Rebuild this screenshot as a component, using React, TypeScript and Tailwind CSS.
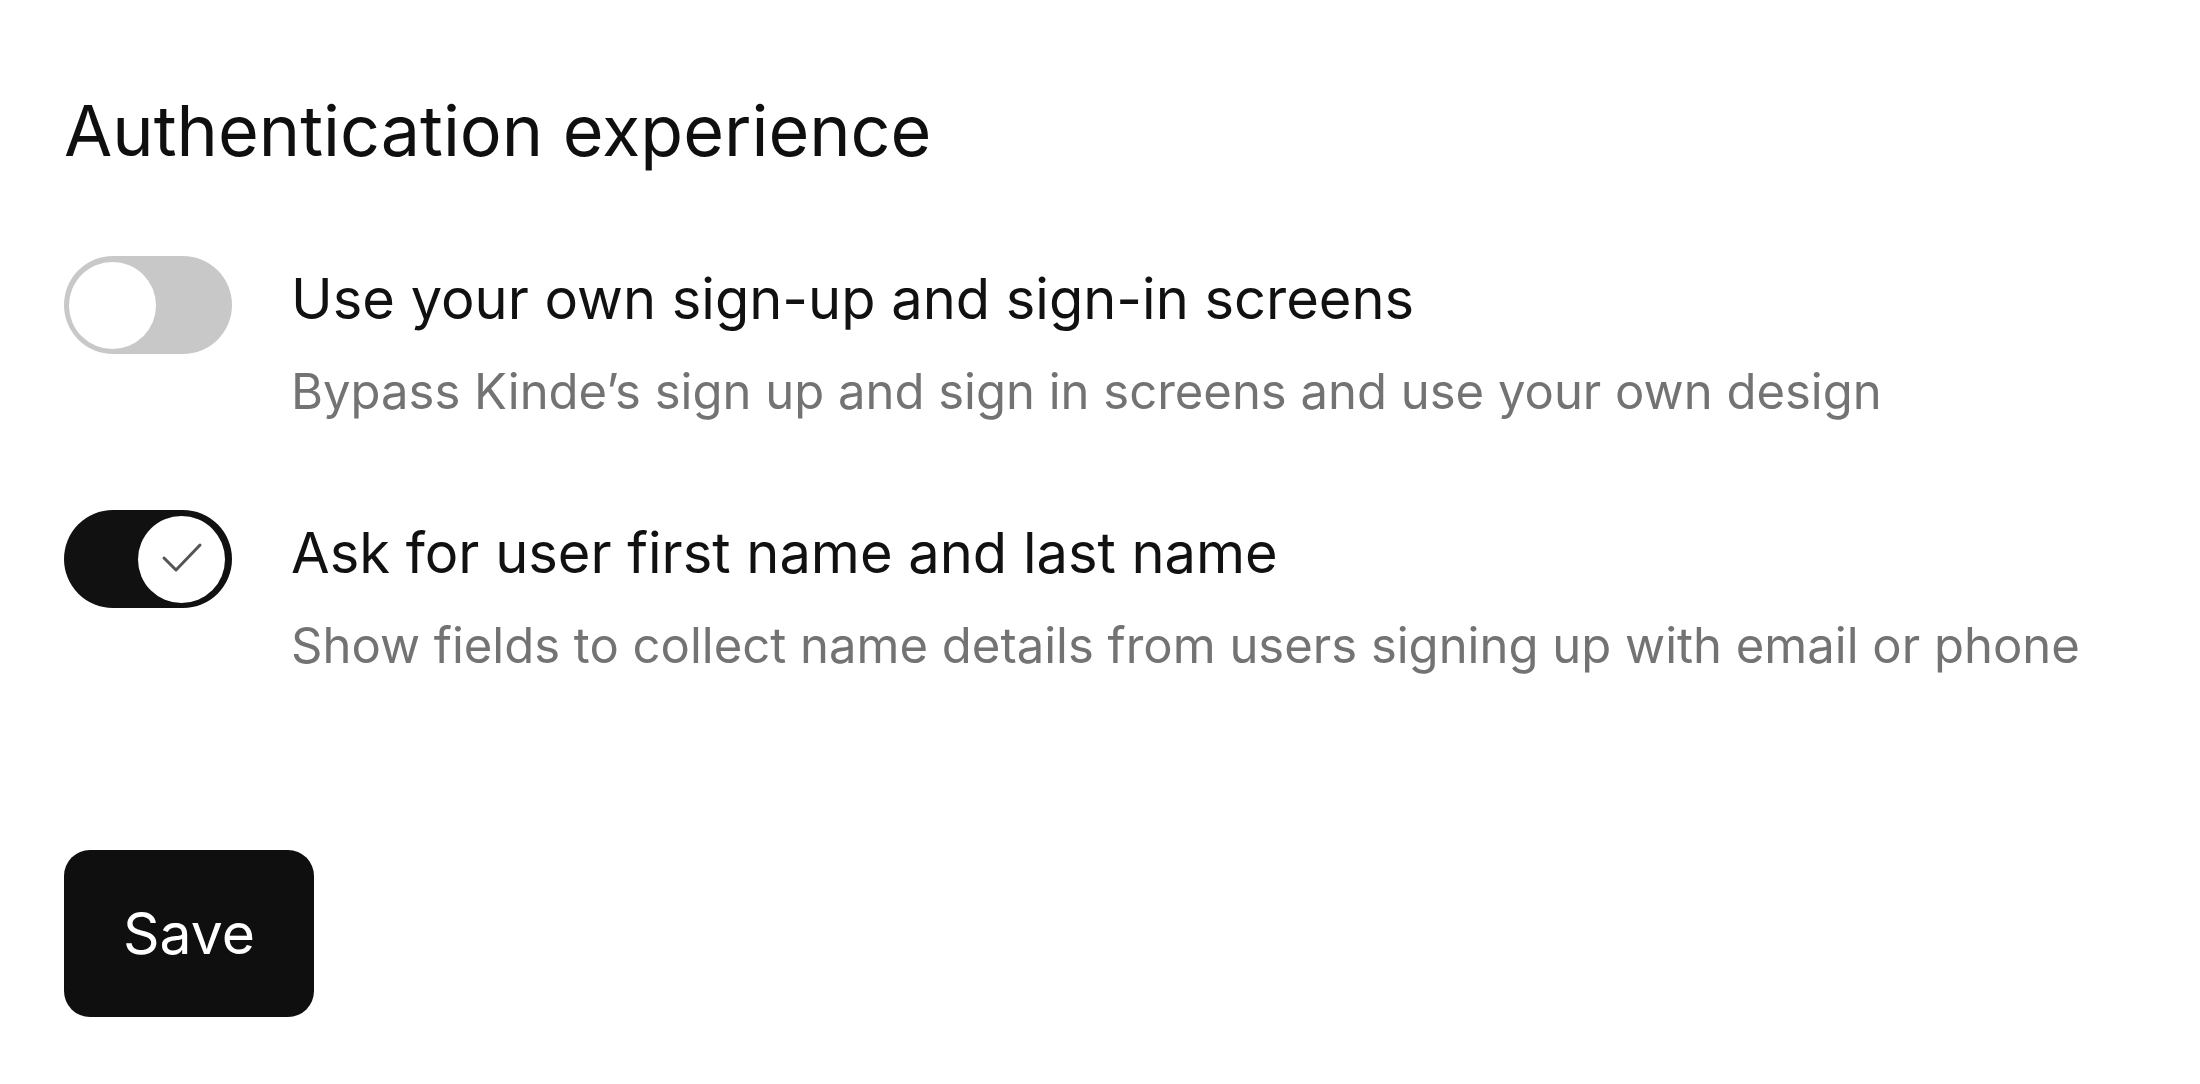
import { useState } from "react";

type ToggleProps = { on: boolean; onChange: (v: boolean) => void };

function Toggle({ on, onChange }: ToggleProps) {
  return (
    <button
      type="button"
      role="switch"
      aria-checked={on}
      onClick={() => onChange(!on)}
      className={
        on
          ? "flex h-[98px] w-[168px] shrink-0 items-center justify-end rounded-full bg-[#111111] pr-[7px]"
          : "flex h-[98px] w-[168px] shrink-0 items-center justify-start rounded-full bg-[#c8c8c8] pl-[5px]"
      }
    >
      <span className="flex h-[87px] w-[87px] items-center justify-center rounded-full bg-white">
        {on && (
          <svg width="44" height="32" viewBox="0 0 44 32" fill="none" className="-mt-[4px]">
            <path d="M4 17L16 29L40 4" stroke="#555555" strokeWidth="3" strokeLinecap="round" strokeLinejoin="round" />
          </svg>
        )}
      </span>
    </button>
  );
}

const settings = [
  {
    title: "Use your own sign-up and sign-in screens",
    desc: "Bypass Kinde’s sign up and sign in screens and use your own design",
    initial: false,
  },
  {
    title: "Ask for user first name and last name",
    desc: "Show fields to collect name details from users signing up with email or phone",
    initial: true,
  },
];

function SettingRow({ title, desc, initial }: { title: string; desc: string; initial: boolean }) {
  const [on, setOn] = useState(initial);
  return (
    <div className="flex items-start gap-[59px]">
      <Toggle on={on} onChange={setOn} />
      <div className="pt-[15px]">
        <p className="text-[56px] leading-none text-[#111111]">{title}</p>
        <p className="mt-[40px] text-[49px] leading-none text-[#737373]">{desc}</p>
      </div>
    </div>
  );
}

export default function App() {
  return (
    <div className="min-h-screen bg-white pl-[64px] pt-[96px] font-['Inter',sans-serif]">
      <h2 className="text-[70px] leading-none text-[#0f0f0f]">Authentication experience</h2>
      <div className="mt-[90px] flex flex-col gap-[94px]">
        {settings.map((s) => (
          <SettingRow key={s.title} {...s} />
        ))}
      </div>
      <button
        type="button"
        className="mt-[180px] flex h-[167px] w-[250px] items-center justify-center rounded-[26px] bg-[#0f0f0f] text-[57px] text-white"
      >
        Save
      </button>
    </div>
  );
}
